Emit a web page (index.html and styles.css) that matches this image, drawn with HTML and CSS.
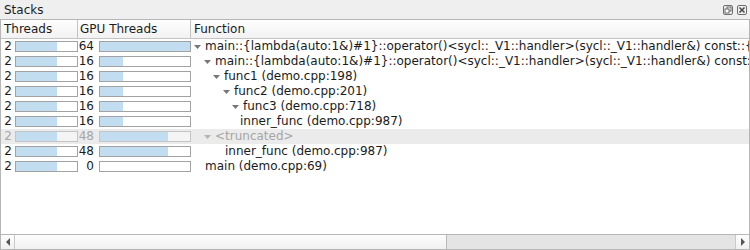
FILE: index.html
```html
<!DOCTYPE html>
<html>
<head>
<meta charset="utf-8">
<link rel="stylesheet" href="styles.css">
</head>
<body>
<div class="win">
  <div class="titlebar">
    <span class="title">Stacks</span>
    <div class="tbtns">
      <svg class="tbtn" width="10" height="10" viewBox="0 0 10 10">
        <rect x="0.5" y="0.5" width="9" height="9" rx="1.5" fill="none" stroke="#6e6e6e"/>
        <rect x="4" y="2" width="4" height="4" fill="none" stroke="#6e6e6e"/>
        <rect x="2" y="4" width="4" height="4" fill="#fff" stroke="#6e6e6e"/>
      </svg>
      <svg class="tbtn" width="10" height="10" viewBox="0 0 10 10">
        <rect x="0.5" y="0.5" width="9" height="9" rx="1.5" fill="none" stroke="#6e6e6e"/>
        <path d="M2.5 2.5 L7.5 7.5 M7.5 2.5 L2.5 7.5" stroke="#4a4a4a" stroke-width="1.6"/>
      </svg>
    </div>
  </div>
  <div class="frame">
    <div class="hdr">
      <div class="hcell c1">Threads</div>
      <div class="hcell c2">GPU Threads</div>
      <div class="hcell c3">Function</div>
    </div>
    <div class="body">
      <div class="row">
        <div class="cell c1"><span class="num n1">2</span><span class="bar b1"><span class="fill" style="width:67%"></span></span></div>
        <div class="cell c2"><span class="num n2">64</span><span class="bar b2"><span class="fill" style="width:100%"></span></span></div>
        <div class="cell c3 fn" style="padding-left:3px"><svg class="arr" width="7" height="4" viewBox="0 0 7 4"><polygon points="0,0 7,0 3.5,4" /></svg>main::{lambda(auto:1&amp;)#1}::operator()&lt;sycl::_V1::handler&gt;(sycl::_V1::handler&amp;) const::{lambda(auto:1&amp;)#1}</div>
      </div>
      <div class="row">
        <div class="cell c1"><span class="num n1">2</span><span class="bar b1"><span class="fill" style="width:67%"></span></span></div>
        <div class="cell c2"><span class="num n2">16</span><span class="bar b2"><span class="fill" style="width:25%"></span></span></div>
        <div class="cell c3 fn" style="padding-left:13px"><svg class="arr" width="7" height="4" viewBox="0 0 7 4"><polygon points="0,0 7,0 3.5,4" /></svg>main::{lambda(auto:1&amp;)#1}::operator()&lt;sycl::_V1::handler&gt;(sycl::_V1::handler&amp;) const::{lambda(auto:1&amp;)#1}</div>
      </div>
      <div class="row">
        <div class="cell c1"><span class="num n1">2</span><span class="bar b1"><span class="fill" style="width:67%"></span></span></div>
        <div class="cell c2"><span class="num n2">16</span><span class="bar b2"><span class="fill" style="width:25%"></span></span></div>
        <div class="cell c3 fn" style="padding-left:22px"><svg class="arr" width="7" height="4" viewBox="0 0 7 4"><polygon points="0,0 7,0 3.5,4" /></svg>func1 (demo.cpp:198)</div>
      </div>
      <div class="row">
        <div class="cell c1"><span class="num n1">2</span><span class="bar b1"><span class="fill" style="width:67%"></span></span></div>
        <div class="cell c2"><span class="num n2">16</span><span class="bar b2"><span class="fill" style="width:25%"></span></span></div>
        <div class="cell c3 fn" style="padding-left:32px"><svg class="arr" width="7" height="4" viewBox="0 0 7 4"><polygon points="0,0 7,0 3.5,4" /></svg>func2 (demo.cpp:201)</div>
      </div>
      <div class="row">
        <div class="cell c1"><span class="num n1">2</span><span class="bar b1"><span class="fill" style="width:67%"></span></span></div>
        <div class="cell c2"><span class="num n2">16</span><span class="bar b2"><span class="fill" style="width:25%"></span></span></div>
        <div class="cell c3 fn" style="padding-left:41px"><svg class="arr" width="7" height="4" viewBox="0 0 7 4"><polygon points="0,0 7,0 3.5,4" /></svg>func3 (demo.cpp:718)</div>
      </div>
      <div class="row">
        <div class="cell c1"><span class="num n1">2</span><span class="bar b1"><span class="fill" style="width:67%"></span></span></div>
        <div class="cell c2"><span class="num n2">16</span><span class="bar b2"><span class="fill" style="width:25%"></span></span></div>
        <div class="cell c3 fn" style="padding-left:49px">inner_func (demo.cpp:987)</div>
      </div>
      <div class="row trunc">
        <div class="cell c1"><span class="num n1">2</span><span class="bar b1"><span class="fill" style="width:67%"></span></span></div>
        <div class="cell c2"><span class="num n2">48</span><span class="bar b2"><span class="fill" style="width:75%"></span></span></div>
        <div class="cell c3 fn" style="padding-left:13px"><svg class="arr" width="7" height="4" viewBox="0 0 7 4"><polygon points="0,0 7,0 3.5,4" /></svg>&lt;truncated&gt;</div>
      </div>
      <div class="row">
        <div class="cell c1"><span class="num n1">2</span><span class="bar b1"><span class="fill" style="width:67%"></span></span></div>
        <div class="cell c2"><span class="num n2">48</span><span class="bar b2"><span class="fill" style="width:75%"></span></span></div>
        <div class="cell c3 fn" style="padding-left:34px">inner_func (demo.cpp:987)</div>
      </div>
      <div class="row">
        <div class="cell c1"><span class="num n1">2</span><span class="bar b1"><span class="fill" style="width:67%"></span></span></div>
        <div class="cell c2"><span class="num n2">0</span><span class="bar b2"><span class="fill" style="width:0%"></span></span></div>
        <div class="cell c3 fn" style="padding-left:14px">main (demo.cpp:69)</div>
      </div>
    </div>
    <div class="hscroll">
      <div class="sbtn"><svg width="4" height="8" viewBox="0 0 4 8"><polygon points="4,0 4,8 0,4" fill="#555"/></svg></div>
      <div class="thumb"></div>
      <div class="track"></div>
      <div class="sbtn right"><svg width="4" height="8" viewBox="0 0 4 8"><polygon points="0,0 0,8 4,4" fill="#555"/></svg></div>
    </div>
  </div>
</div>
</body>
</html>
```
FILE: styles.css
```css
html, body {
  margin: 0;
  padding: 0;
}
body {
  width: 750px;
  height: 250px;
  overflow: hidden;
  background: #efefef;
  font-family: "DejaVu Sans", sans-serif;
  font-size: 12px;
  color: #1b1b1b;
}
.win {
  width: 750px;
  height: 250px;
  display: flex;
  flex-direction: column;
}
.titlebar {
  height: 19px;
  display: flex;
  align-items: center;
  justify-content: space-between;
  padding: 0 3px 0 4px;
  box-sizing: border-box;
}
.title {
  line-height: 19px;
  padding-top: 2px;
}
.tbtns {
  display: flex;
  gap: 4px;
  align-items: center;
}
.tbtn {
  display: block;
}
.frame {
  flex: 1;
  border: 1px solid #b6b6b6;
  background: #fff;
  display: flex;
  flex-direction: column;
  overflow: hidden;
}
.hdr {
  height: 19px;
  flex: none;
  box-sizing: border-box;
  display: grid;
  grid-template-columns: 77px 113px 1fr;
  background: linear-gradient(#fefefe, #f2f2f2);
  border-bottom: 1px solid #c4c4c4;
}
.hcell {
  line-height: 18px;
  padding-left: 3px;
  white-space: nowrap;
  overflow: hidden;
}
.hcell.c1, .hcell.c2 {
  border-right: 1px solid #c4c4c4;
}
.hcell.c2 {
  padding-left: 2px;
}
.body {
  flex: 1;
  overflow: hidden;
}
.row {
  height: 15px;
  display: grid;
  grid-template-columns: 77px 113px 1fr;
  align-items: center;
}
.row.trunc {
  background: #ebebeb;
  color: #a6a6a6;
}
.cell {
  display: flex;
  align-items: center;
  height: 15px;
  white-space: nowrap;
  overflow: hidden;
}
.num {
  text-align: right;
  flex: none;
  line-height: 15px;
}
.n1 {
  width: 11px;
}
.n2 {
  width: 16px;
}
.bar {
  flex: 1;
  height: 11px;
  box-sizing: border-box;
  border: 1px solid #a2a2a2;
  background: #fff;
  display: block;
  overflow: hidden;
}
.b1 {
  margin-left: 3px;
}
.b2 {
  margin-left: 5px;
}
.trunc .bar {
  border-color: #c4c4c4;
  background: #f4f4f4;
}
.fill {
  display: block;
  height: 100%;
  background: #c3ddf0;
}
.fn {
  line-height: 15px;
}
.arr {
  flex: none;
  fill: #777;
  margin-right: 4px;
}
.trunc .arr {
  fill: #b4b4b4;
}
.hscroll {
  height: 15px;
  flex: none;
  box-sizing: border-box;
  border-top: 1px solid #b6b6b6;
  display: flex;
  background: #e4e4e4;
}
.sbtn {
  width: 14px;
  flex: none;
  display: flex;
  align-items: center;
  justify-content: center;
  background: linear-gradient(#fdfdfd, #f0f0f0);
  border-right: 1px solid #c8c8c8;
  box-sizing: border-box;
}
.sbtn.right {
  border-right: none;
  border-left: 1px solid #c8c8c8;
}
.thumb {
  width: 432px;
  flex: none;
  background: linear-gradient(#fdfdfd, #f0f0f0);
  border-right: 1px solid #b8b8b8;
  box-sizing: border-box;
}
.track {
  flex: 1;
}
```
